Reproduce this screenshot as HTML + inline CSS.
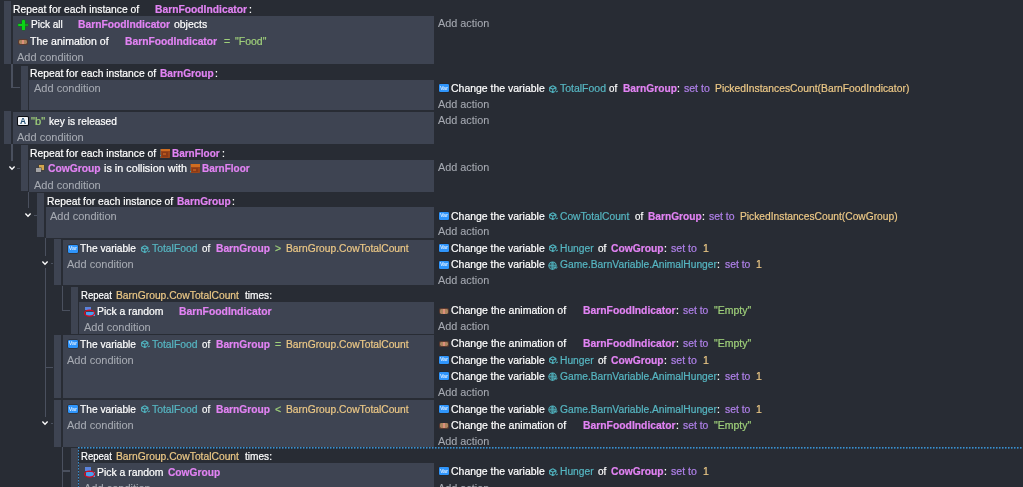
<!DOCTYPE html>
<html lang="en"><head><meta charset="utf-8"><title>Events</title>
<style>
html,body{margin:0;padding:0;}
body{width:1023px;height:487px;overflow:hidden;background:#282c34;position:relative;font-family:"Liberation Sans",sans-serif;}
#root{position:absolute;left:0;top:0;width:1023px;height:487px;overflow:hidden;will-change:transform;}
.b{position:absolute;}
span{position:absolute;white-space:pre;font-size:11.7px;line-height:16px;transform-origin:0 50%;-webkit-text-stroke:0.22px currentColor;}
.t{color:#ffffff;} .a{color:#a6aab2;-webkit-text-stroke-width:0.08px;} .o{color:#e283f3;font-weight:700;} .v{color:#56b6c2;}
.e{color:#ecc886;} .s{color:#9fd07a;} .p{color:#b081ea;}
.ic{transform:none;-webkit-text-stroke:0;font-family:"Liberation Sans",sans-serif;}
</style></head><body><div id="root">
<div class="b" style="left:433.75px;top:0.00px;width:589.25px;height:487.00px;background:#282c34"></div>
<div class="b" style="left:4.10px;top:0.90px;width:1018.90px;height:64.70px;background:#282c34"></div>
<div class="b" style="left:20.70px;top:65.60px;width:1002.30px;height:45.80px;background:#282c34"></div>
<div class="b" style="left:4.10px;top:111.40px;width:1018.90px;height:33.90px;background:#282c34"></div>
<div class="b" style="left:20.70px;top:145.30px;width:1002.30px;height:47.60px;background:#282c34"></div>
<div class="b" style="left:37.30px;top:192.90px;width:985.70px;height:46.30px;background:#282c34"></div>
<div class="b" style="left:53.90px;top:239.20px;width:969.10px;height:47.80px;background:#282c34"></div>
<div class="b" style="left:70.50px;top:287.00px;width:952.50px;height:47.70px;background:#282c34"></div>
<div class="b" style="left:53.90px;top:334.70px;width:969.10px;height:65.00px;background:#282c34"></div>
<div class="b" style="left:53.90px;top:399.70px;width:969.10px;height:48.30px;background:#282c34"></div>
<div class="b" style="left:70.50px;top:448.00px;width:952.50px;height:42.00px;background:#282c34"></div>
<div class="b" style="left:4.10px;top:0.90px;width:7.00px;height:62.85px;background:#3e4452"></div>
<div class="b" style="left:12.75px;top:15.90px;width:421.00px;height:47.85px;background:#3e4452"></div>
<div class="b" style="left:20.70px;top:65.60px;width:7.00px;height:44.40px;background:#3e4452"></div>
<div class="b" style="left:29.10px;top:79.50px;width:404.65px;height:30.50px;background:#3e4452"></div>
<div class="b" style="left:4.10px;top:111.40px;width:7.00px;height:32.35px;background:#3e4452"></div>
<div class="b" style="left:12.75px;top:111.70px;width:421.00px;height:32.05px;background:#3e4452"></div>
<div class="b" style="left:20.70px;top:145.30px;width:7.00px;height:46.20px;background:#3e4452"></div>
<div class="b" style="left:29.10px;top:159.50px;width:404.65px;height:32.00px;background:#3e4452"></div>
<div class="b" style="left:37.30px;top:192.90px;width:7.00px;height:44.60px;background:#3e4452"></div>
<div class="b" style="left:45.90px;top:207.00px;width:387.85px;height:30.50px;background:#3e4452"></div>
<div class="b" style="left:53.90px;top:239.20px;width:7.00px;height:46.30px;background:#3e4452"></div>
<div class="b" style="left:62.50px;top:239.80px;width:371.25px;height:45.70px;background:#3e4452"></div>
<div class="b" style="left:70.50px;top:287.00px;width:7.00px;height:46.75px;background:#3e4452"></div>
<div class="b" style="left:79.10px;top:301.75px;width:354.65px;height:32.00px;background:#3e4452"></div>
<div class="b" style="left:53.90px;top:334.70px;width:7.00px;height:63.30px;background:#3e4452"></div>
<div class="b" style="left:62.50px;top:335.20px;width:371.25px;height:62.80px;background:#3e4452"></div>
<div class="b" style="left:53.90px;top:399.70px;width:7.00px;height:47.00px;background:#3e4452"></div>
<div class="b" style="left:62.50px;top:400.10px;width:371.25px;height:46.60px;background:#3e4452"></div>
<div class="b" style="left:70.50px;top:448.00px;width:7.00px;height:42.00px;background:#3e4452"></div>
<div class="b" style="left:79.10px;top:463.00px;width:354.65px;height:27.00px;background:#3e4452"></div>
<div class="b" style="left:11.25px;top:63.90px;width:1.30px;height:24.20px;background:#4a505e"></div>
<div class="b" style="left:11.90px;top:86.85px;width:7.70px;height:1.30px;background:#4a505e"></div>
<div class="b" style="left:11.25px;top:143.90px;width:1.30px;height:17.00px;background:#4a505e"></div>
<div class="b" style="left:27.75px;top:191.60px;width:1.30px;height:16.90px;background:#4a505e"></div>
<div class="b" style="left:44.75px;top:237.60px;width:1.30px;height:18.60px;background:#4a505e"></div>
<div class="b" style="left:44.75px;top:267.50px;width:1.30px;height:149.10px;background:#4a505e"></div>
<div class="b" style="left:45.40px;top:366.85px;width:7.60px;height:1.30px;background:#4a505e"></div>
<div class="b" style="left:61.75px;top:285.60px;width:1.30px;height:25.30px;background:#4a505e"></div>
<div class="b" style="left:62.40px;top:309.65px;width:7.80px;height:1.30px;background:#4a505e"></div>
<div class="b" style="left:61.75px;top:446.70px;width:1.30px;height:40.30px;background:#4a505e"></div>
<div class="b" style="left:62.40px;top:470.35px;width:7.60px;height:1.30px;background:#4a505e"></div>
<div class="b" style="left:17.20px;top:168.00px;width:2.50px;height:1.20px;background:#4a505e"></div>
<div class="b" style="left:34.40px;top:215.20px;width:2.50px;height:1.20px;background:#4a505e"></div>
<div class="b" style="left:51.10px;top:262.60px;width:2.00px;height:1.20px;background:#4a505e"></div>
<div class="b" style="left:51.10px;top:423.10px;width:2.00px;height:1.20px;background:#4a505e"></div>
<svg class="b" style="left:7.50px;top:163.70px" width="8" height="8" viewBox="0 0 8 8"><path d="M1.4 2.5 L4 5.3 L6.6 2.5" fill="none" stroke="#fff" stroke-width="1.3"/></svg>
<svg class="b" style="left:24.40px;top:211.20px" width="8" height="8" viewBox="0 0 8 8"><path d="M1.4 2.5 L4 5.3 L6.6 2.5" fill="none" stroke="#fff" stroke-width="1.3"/></svg>
<svg class="b" style="left:41.00px;top:258.50px" width="8" height="8" viewBox="0 0 8 8"><path d="M1.4 2.5 L4 5.3 L6.6 2.5" fill="none" stroke="#fff" stroke-width="1.3"/></svg>
<svg class="b" style="left:41.00px;top:419.30px" width="8" height="8" viewBox="0 0 8 8"><path d="M1.4 2.5 L4 5.3 L6.6 2.5" fill="none" stroke="#fff" stroke-width="1.3"/></svg>
<div class="b" style="left:21.75px;top:20.10px;width:3.00px;height:9.80px;background:#0bd616;border-radius:0.9px;box-shadow:0 0 0 0.45px #0b7d12"></div><div class="b" style="left:17.80px;top:23.55px;width:10.10px;height:2.90px;background:#0bd616;border-radius:0.9px;box-shadow:0 0 0 0.45px #0b7d12"></div><div class="b" style="left:21.75px;top:20.50px;width:3.00px;height:9.00px;background:#0bd616;"></div><div class="b" style="left:24.95px;top:23.55px;width:3.50px;height:2.90px;background:#1a9a20;border-radius:0 0.9px 0.9px 0"></div>
<div class="b" style="left:18.10px;top:38.80px;width:10.00px;height:6.30px;background:#5a3a30;border-radius:2px"></div><div class="b" style="left:18.80px;top:39.50px;width:8.60px;height:4.90px;background:#a9855f;border-radius:1.4px"></div><div class="b" style="left:22.10px;top:39.50px;width:2.10px;height:4.90px;background:#dd8f7b;"></div>
<div class="b" style="left:17.00px;top:115.90px;width:12.00px;height:10.60px;background:#0b0d12;border-radius:2px"></div><div class="b" style="left:18.20px;top:117.10px;width:9.60px;height:7.90px;background:#f3f5f8;border-radius:0.8px"></div><span class="ic" style="left:19.90px;top:117.30px;font-size:8.4px;line-height:8px;color:#1d4a6e;font-weight:700">A</span>
<div class="b" style="left:159.90px;top:148.70px;width:10.00px;height:9.40px;background:#9c4519;border-radius:0.8px"></div><div class="b" style="left:161.10px;top:149.00px;width:8.80px;height:2.20px;background:#d06d20;"></div><div class="b" style="left:162.10px;top:152.30px;width:6.40px;height:4.60px;background:#8a3a17;"></div><div class="b" style="left:163.30px;top:153.10px;width:3.00px;height:2.20px;background:#b8561c;"></div><div class="b" style="left:159.90px;top:149.30px;width:1.30px;height:8.40px;background:#6a5a50;"></div><div class="b" style="left:160.10px;top:155.30px;width:1.00px;height:1.20px;background:#3aa0b4;"></div>
<div class="b" style="left:189.90px;top:164.10px;width:10.00px;height:9.40px;background:#9c4519;border-radius:0.8px"></div><div class="b" style="left:191.10px;top:164.40px;width:8.80px;height:2.20px;background:#d06d20;"></div><div class="b" style="left:192.10px;top:167.70px;width:6.40px;height:4.60px;background:#8a3a17;"></div><div class="b" style="left:193.30px;top:168.50px;width:3.00px;height:2.20px;background:#b8561c;"></div><div class="b" style="left:189.90px;top:164.70px;width:1.30px;height:8.40px;background:#6a5a50;"></div><div class="b" style="left:190.10px;top:170.70px;width:1.00px;height:1.20px;background:#3aa0b4;"></div>
<div class="b" style="left:38.50px;top:165.10px;width:5.40px;height:4.60px;background:#d2a64e;box-shadow:0 0 0 0.5px #4a3c28"></div><div class="b" style="left:35.90px;top:168.30px;width:5.60px;height:4.20px;background:#a4a4a6;box-shadow:0 0 0 0.5px #3c3c40"></div>
<div class="b" style="left:439.00px;top:84.45px;width:10.10px;height:8.00px;background:#2f95fb;border-radius:1.3px;box-shadow:0 0 0 0.5px #20242c"></div><span class="ic" style="left:439.90px;top:84.55px;font-size:5.4px;line-height:6.4px;color:#cfe6ff;font-weight:700;letter-spacing:-0.1px">Var</span>
<div class="b" style="left:439.00px;top:211.70px;width:10.10px;height:8.00px;background:#2f95fb;border-radius:1.3px;box-shadow:0 0 0 0.5px #20242c"></div><span class="ic" style="left:439.90px;top:211.80px;font-size:5.4px;line-height:6.4px;color:#cfe6ff;font-weight:700;letter-spacing:-0.1px">Var</span>
<div class="b" style="left:439.00px;top:244.20px;width:10.10px;height:8.00px;background:#2f95fb;border-radius:1.3px;box-shadow:0 0 0 0.5px #20242c"></div><span class="ic" style="left:439.90px;top:244.30px;font-size:5.4px;line-height:6.4px;color:#cfe6ff;font-weight:700;letter-spacing:-0.1px">Var</span>
<div class="b" style="left:439.00px;top:260.60px;width:10.10px;height:8.00px;background:#2f95fb;border-radius:1.3px;box-shadow:0 0 0 0.5px #20242c"></div><span class="ic" style="left:439.90px;top:260.70px;font-size:5.4px;line-height:6.4px;color:#cfe6ff;font-weight:700;letter-spacing:-0.1px">Var</span>
<div class="b" style="left:439.00px;top:356.20px;width:10.10px;height:8.00px;background:#2f95fb;border-radius:1.3px;box-shadow:0 0 0 0.5px #20242c"></div><span class="ic" style="left:439.90px;top:356.30px;font-size:5.4px;line-height:6.4px;color:#cfe6ff;font-weight:700;letter-spacing:-0.1px">Var</span>
<div class="b" style="left:439.00px;top:372.45px;width:10.10px;height:8.00px;background:#2f95fb;border-radius:1.3px;box-shadow:0 0 0 0.5px #20242c"></div><span class="ic" style="left:439.90px;top:372.55px;font-size:5.4px;line-height:6.4px;color:#cfe6ff;font-weight:700;letter-spacing:-0.1px">Var</span>
<div class="b" style="left:439.00px;top:404.95px;width:10.10px;height:8.00px;background:#2f95fb;border-radius:1.3px;box-shadow:0 0 0 0.5px #20242c"></div><span class="ic" style="left:439.90px;top:405.05px;font-size:5.4px;line-height:6.4px;color:#cfe6ff;font-weight:700;letter-spacing:-0.1px">Var</span>
<div class="b" style="left:439.00px;top:467.45px;width:10.10px;height:8.00px;background:#2f95fb;border-radius:1.3px;box-shadow:0 0 0 0.5px #20242c"></div><span class="ic" style="left:439.90px;top:467.55px;font-size:5.4px;line-height:6.4px;color:#cfe6ff;font-weight:700;letter-spacing:-0.1px">Var</span>
<div class="b" style="left:438.90px;top:308.15px;width:10.00px;height:6.30px;background:#5a3a30;border-radius:2px"></div><div class="b" style="left:439.60px;top:308.85px;width:8.60px;height:4.90px;background:#a9855f;border-radius:1.4px"></div><div class="b" style="left:442.90px;top:308.85px;width:2.10px;height:4.90px;background:#dd8f7b;"></div>
<div class="b" style="left:438.90px;top:340.90px;width:10.00px;height:6.30px;background:#5a3a30;border-radius:2px"></div><div class="b" style="left:439.60px;top:341.60px;width:8.60px;height:4.90px;background:#a9855f;border-radius:1.4px"></div><div class="b" style="left:442.90px;top:341.60px;width:2.10px;height:4.90px;background:#dd8f7b;"></div>
<div class="b" style="left:438.90px;top:422.65px;width:10.00px;height:6.30px;background:#5a3a30;border-radius:2px"></div><div class="b" style="left:439.60px;top:423.35px;width:8.60px;height:4.90px;background:#a9855f;border-radius:1.4px"></div><div class="b" style="left:442.90px;top:423.35px;width:2.10px;height:4.90px;background:#dd8f7b;"></div>
<div class="b" style="left:67.90px;top:244.70px;width:10.10px;height:8.00px;background:#2f95fb;border-radius:1.3px;box-shadow:0 0 0 0.5px #20242c"></div><span class="ic" style="left:68.80px;top:244.80px;font-size:5.4px;line-height:6.4px;color:#cfe6ff;font-weight:700;letter-spacing:-0.1px">Var</span>
<svg class="b" style="left:141.00px;top:244.70px" width="9.9" height="8.5" viewBox="0 0 11 9.4"><path d="M4.2 0.9 L7.7 2.7 L7.7 5.6 M6.0 7.4 L4.2 8.3 L0.7 6.5 L0.7 2.7 L4.2 0.9 M0.7 2.7 L4.2 4.6 L7.7 2.7 M4.2 4.6 V8.3" fill="none" stroke="#50b4c0" stroke-width="1.2" stroke-linejoin="round"/><path d="M5.9 7.3 L7.3 6.1 L8.4 7.7 L10.0 6.5" fill="none" stroke="#50b4c0" stroke-width="1.1"/></svg>
<div class="b" style="left:67.90px;top:339.90px;width:10.10px;height:8.00px;background:#2f95fb;border-radius:1.3px;box-shadow:0 0 0 0.5px #20242c"></div><span class="ic" style="left:68.80px;top:340.00px;font-size:5.4px;line-height:6.4px;color:#cfe6ff;font-weight:700;letter-spacing:-0.1px">Var</span>
<svg class="b" style="left:141.00px;top:339.90px" width="9.9" height="8.5" viewBox="0 0 11 9.4"><path d="M4.2 0.9 L7.7 2.7 L7.7 5.6 M6.0 7.4 L4.2 8.3 L0.7 6.5 L0.7 2.7 L4.2 0.9 M0.7 2.7 L4.2 4.6 L7.7 2.7 M4.2 4.6 V8.3" fill="none" stroke="#50b4c0" stroke-width="1.2" stroke-linejoin="round"/><path d="M5.9 7.3 L7.3 6.1 L8.4 7.7 L10.0 6.5" fill="none" stroke="#50b4c0" stroke-width="1.1"/></svg>
<div class="b" style="left:67.90px;top:405.40px;width:10.10px;height:8.00px;background:#2f95fb;border-radius:1.3px;box-shadow:0 0 0 0.5px #20242c"></div><span class="ic" style="left:68.80px;top:405.50px;font-size:5.4px;line-height:6.4px;color:#cfe6ff;font-weight:700;letter-spacing:-0.1px">Var</span>
<svg class="b" style="left:141.00px;top:405.40px" width="9.9" height="8.5" viewBox="0 0 11 9.4"><path d="M4.2 0.9 L7.7 2.7 L7.7 5.6 M6.0 7.4 L4.2 8.3 L0.7 6.5 L0.7 2.7 L4.2 0.9 M0.7 2.7 L4.2 4.6 L7.7 2.7 M4.2 4.6 V8.3" fill="none" stroke="#50b4c0" stroke-width="1.2" stroke-linejoin="round"/><path d="M5.9 7.3 L7.3 6.1 L8.4 7.7 L10.0 6.5" fill="none" stroke="#50b4c0" stroke-width="1.1"/></svg>
<svg class="b" style="left:548.90px;top:84.65px" width="9.9" height="8.5" viewBox="0 0 11 9.4"><path d="M4.2 0.9 L7.7 2.7 L7.7 5.6 M6.0 7.4 L4.2 8.3 L0.7 6.5 L0.7 2.7 L4.2 0.9 M0.7 2.7 L4.2 4.6 L7.7 2.7 M4.2 4.6 V8.3" fill="none" stroke="#50b4c0" stroke-width="1.2" stroke-linejoin="round"/><path d="M5.9 7.3 L7.3 6.1 L8.4 7.7 L10.0 6.5" fill="none" stroke="#50b4c0" stroke-width="1.1"/></svg>
<svg class="b" style="left:548.90px;top:211.90px" width="9.9" height="8.5" viewBox="0 0 11 9.4"><path d="M4.2 0.9 L7.7 2.7 L7.7 5.6 M6.0 7.4 L4.2 8.3 L0.7 6.5 L0.7 2.7 L4.2 0.9 M0.7 2.7 L4.2 4.6 L7.7 2.7 M4.2 4.6 V8.3" fill="none" stroke="#50b4c0" stroke-width="1.2" stroke-linejoin="round"/><path d="M5.9 7.3 L7.3 6.1 L8.4 7.7 L10.0 6.5" fill="none" stroke="#50b4c0" stroke-width="1.1"/></svg>
<svg class="b" style="left:548.90px;top:244.20px" width="9.9" height="8.5" viewBox="0 0 11 9.4"><path d="M4.2 0.9 L7.7 2.7 L7.7 5.6 M6.0 7.4 L4.2 8.3 L0.7 6.5 L0.7 2.7 L4.2 0.9 M0.7 2.7 L4.2 4.6 L7.7 2.7 M4.2 4.6 V8.3" fill="none" stroke="#50b4c0" stroke-width="1.2" stroke-linejoin="round"/><path d="M5.9 7.3 L7.3 6.1 L8.4 7.7 L10.0 6.5" fill="none" stroke="#50b4c0" stroke-width="1.1"/></svg>
<svg class="b" style="left:548.90px;top:356.15px" width="9.9" height="8.5" viewBox="0 0 11 9.4"><path d="M4.2 0.9 L7.7 2.7 L7.7 5.6 M6.0 7.4 L4.2 8.3 L0.7 6.5 L0.7 2.7 L4.2 0.9 M0.7 2.7 L4.2 4.6 L7.7 2.7 M4.2 4.6 V8.3" fill="none" stroke="#50b4c0" stroke-width="1.2" stroke-linejoin="round"/><path d="M5.9 7.3 L7.3 6.1 L8.4 7.7 L10.0 6.5" fill="none" stroke="#50b4c0" stroke-width="1.1"/></svg>
<svg class="b" style="left:548.90px;top:467.65px" width="9.9" height="8.5" viewBox="0 0 11 9.4"><path d="M4.2 0.9 L7.7 2.7 L7.7 5.6 M6.0 7.4 L4.2 8.3 L0.7 6.5 L0.7 2.7 L4.2 0.9 M0.7 2.7 L4.2 4.6 L7.7 2.7 M4.2 4.6 V8.3" fill="none" stroke="#50b4c0" stroke-width="1.2" stroke-linejoin="round"/><path d="M5.9 7.3 L7.3 6.1 L8.4 7.7 L10.0 6.5" fill="none" stroke="#50b4c0" stroke-width="1.1"/></svg>
<svg class="b" style="left:548.00px;top:260.50px" width="10.1" height="9.5" viewBox="0 0 11.2 10.6"><circle cx="5" cy="5.2" r="4.1" fill="#50b4c0" fill-opacity="0.22" stroke="#50b4c0" stroke-width="1.15"/><path d="M5 1.1 C2.9 3 2.9 7.4 5 9.3 M5 1.1 C7.1 3 7.1 7.4 5 9.3 M0.9 5.2 H9.1 M5 1.1 V9.3" fill="none" stroke="#50b4c0" stroke-width="0.8"/><path d="M6.6 7.7 L8.0 6.5 L9.0 8.1 L10.6 6.9" fill="none" stroke="#50b4c0" stroke-width="1.1"/></svg>
<svg class="b" style="left:548.00px;top:372.35px" width="10.1" height="9.5" viewBox="0 0 11.2 10.6"><circle cx="5" cy="5.2" r="4.1" fill="#50b4c0" fill-opacity="0.22" stroke="#50b4c0" stroke-width="1.15"/><path d="M5 1.1 C2.9 3 2.9 7.4 5 9.3 M5 1.1 C7.1 3 7.1 7.4 5 9.3 M0.9 5.2 H9.1 M5 1.1 V9.3" fill="none" stroke="#50b4c0" stroke-width="0.8"/><path d="M6.6 7.7 L8.0 6.5 L9.0 8.1 L10.6 6.9" fill="none" stroke="#50b4c0" stroke-width="1.1"/></svg>
<svg class="b" style="left:548.00px;top:404.60px" width="10.1" height="9.5" viewBox="0 0 11.2 10.6"><circle cx="5" cy="5.2" r="4.1" fill="#50b4c0" fill-opacity="0.22" stroke="#50b4c0" stroke-width="1.15"/><path d="M5 1.1 C2.9 3 2.9 7.4 5 9.3 M5 1.1 C7.1 3 7.1 7.4 5 9.3 M0.9 5.2 H9.1 M5 1.1 V9.3" fill="none" stroke="#50b4c0" stroke-width="0.8"/><path d="M6.6 7.7 L8.0 6.5 L9.0 8.1 L10.6 6.9" fill="none" stroke="#50b4c0" stroke-width="1.1"/></svg>
<div class="b" style="left:84.60px;top:306.60px;width:6.40px;height:3.60px;background:#5b84de;"></div><div class="b" style="left:86.00px;top:311.50px;width:9.00px;height:4.90px;background:#4a9ff0;"></div><svg class="b" style="left:82.80px;top:309.00px" width="13" height="9" viewBox="0 0 13 9"><ellipse cx="6.5" cy="4.1" rx="5.0" ry="2.95" fill="none" stroke="#e0061e" stroke-width="1.15"/></svg>
<div class="b" style="left:84.60px;top:467.40px;width:6.40px;height:3.60px;background:#5b84de;"></div><div class="b" style="left:86.00px;top:472.30px;width:9.00px;height:4.90px;background:#4a9ff0;"></div><svg class="b" style="left:82.80px;top:469.80px" width="13" height="9" viewBox="0 0 13 9"><ellipse cx="6.5" cy="4.1" rx="5.0" ry="2.95" fill="none" stroke="#e0061e" stroke-width="1.15"/></svg>
<div class="b" style="left:78px;top:447px;width:945px;height:1px;background:repeating-linear-gradient(90deg,#3a90cf 0,#3a90cf 1px,#30628a 1px,#30628a 2px,#282c34 2px,#282c34 3px)"></div>
<div class="b" style="left:78px;top:448px;width:945px;height:1px;background:repeating-linear-gradient(90deg,#2f6d9c 0,#2f6d9c 1px,#2c4a63 1px,#2c4a63 2px,#282c34 2px,#282c34 3px)"></div>
<div class="b" style="left:78px;top:447px;width:1px;height:45px;background:repeating-linear-gradient(180deg,#3a90cf 0,#3a90cf 1px,#30628a 1px,#30628a 2px,#282c34 2px,#282c34 3px)"></div>
<span id="t0" class="t" style="left:12.50px;top:1.05px;transform:scaleX(0.8821);">Repeat for each instance of</span>
<span id="t1" class="o" style="left:155.00px;top:1.05px;transform:scaleX(0.8810);">BarnFoodIndicator</span>
<span id="t2" class="t" style="left:249.10px;top:1.05px;transform:scaleX(0.9000);">:</span>
<span id="t3" class="t" style="left:30.60px;top:16.05px;transform:scaleX(0.8593);">Pick all</span>
<span id="t4" class="o" style="left:78.00px;top:16.05px;transform:scaleX(0.8810);">BarnFoodIndicator</span>
<span id="t5" class="t" style="left:174.25px;top:16.05px;transform:scaleX(0.8941);">objects</span>
<span id="t6" class="t" style="left:30.00px;top:33.05px;transform:scaleX(0.9025);">The animation of</span>
<span id="t7" class="o" style="left:125.00px;top:33.05px;transform:scaleX(0.8810);">BarnFoodIndicator</span>
<span id="t8" class="s" style="left:223.50px;top:33.05px;transform:scaleX(0.9000);">=</span>
<span id="t9" class="s" style="left:235.00px;top:33.05px;transform:scaleX(0.8983);">"Food"</span>
<span id="t10" class="a" style="left:17.15px;top:49.05px;transform:scaleX(0.9420);">Add condition</span>
<span id="t11" class="a" style="left:437.75px;top:15.05px;transform:scaleX(0.9273);">Add action</span>
<span id="t12" class="t" style="left:29.50px;top:65.05px;transform:scaleX(0.8821);">Repeat for each instance of</span>
<span id="t13" class="o" style="left:159.50px;top:65.05px;transform:scaleX(0.8693);">BarnGroup</span>
<span id="t14" class="t" style="left:214.60px;top:65.05px;transform:scaleX(0.9000);">:</span>
<span id="t15" class="a" style="left:33.50px;top:80.05px;transform:scaleX(0.9420);">Add condition</span>
<span id="t16" class="t" style="left:450.50px;top:80.05px;transform:scaleX(0.8957);">Change the variable</span>
<span id="t17" class="v" style="left:560.00px;top:80.05px;transform:scaleX(0.8952);">TotalFood</span>
<span id="t18" class="t" style="left:609.25px;top:80.05px;transform:scaleX(0.8333);">of</span>
<span id="t19" class="o" style="left:622.50px;top:80.05px;transform:scaleX(0.8733);">BarnGroup</span>
<span id="t20" class="t" style="left:676.60px;top:80.05px;transform:scaleX(0.9000);">:</span>
<span id="t21" class="p" style="left:684.00px;top:80.05px;transform:scaleX(0.9008);">set to</span>
<span id="t22" class="e" style="left:714.80px;top:80.05px;transform:scaleX(0.8823);">PickedInstancesCount(BarnFoodIndicator)</span>
<span id="t23" class="a" style="left:437.75px;top:96.05px;transform:scaleX(0.9273);">Add action</span>
<span id="t24" class="s" style="left:31.00px;top:113.05px;transform:scaleX(0.9557);">"b"</span>
<span id="t25" class="t" style="left:48.75px;top:113.05px;transform:scaleX(0.8715);">key is released</span>
<span id="t26" class="a" style="left:17.15px;top:129.05px;transform:scaleX(0.9420);">Add condition</span>
<span id="t27" class="a" style="left:437.75px;top:112.05px;transform:scaleX(0.9273);">Add action</span>
<span id="t28" class="t" style="left:29.50px;top:145.05px;transform:scaleX(0.8821);">Repeat for each instance of</span>
<span id="t29" class="o" style="left:172.00px;top:145.05px;transform:scaleX(0.8527);">BarnFloor</span>
<span id="t30" class="t" style="left:221.60px;top:145.05px;transform:scaleX(0.9000);">:</span>
<span id="t31" class="o" style="left:47.50px;top:160.05px;transform:scaleX(0.8810);">CowGroup</span>
<span id="t32" class="t" style="left:103.75px;top:160.05px;transform:scaleX(0.9255);">is in collision with</span>
<span id="t33" class="o" style="left:202.00px;top:160.05px;transform:scaleX(0.8527);">BarnFloor</span>
<span id="t34" class="a" style="left:33.50px;top:177.05px;transform:scaleX(0.9420);">Add condition</span>
<span id="t35" class="a" style="left:437.75px;top:159.05px;transform:scaleX(0.9273);">Add action</span>
<span id="t36" class="t" style="left:46.50px;top:193.05px;transform:scaleX(0.8821);">Repeat for each instance of</span>
<span id="t37" class="o" style="left:176.50px;top:193.05px;transform:scaleX(0.8693);">BarnGroup</span>
<span id="t38" class="t" style="left:231.60px;top:193.05px;transform:scaleX(0.9000);">:</span>
<span id="t39" class="a" style="left:50.30px;top:208.05px;transform:scaleX(0.9420);">Add condition</span>
<span id="t40" class="t" style="left:450.50px;top:208.05px;transform:scaleX(0.8957);">Change the variable</span>
<span id="t41" class="v" style="left:560.00px;top:208.05px;transform:scaleX(0.8749);">CowTotalCount</span>
<span id="t42" class="t" style="left:634.50px;top:208.05px;transform:scaleX(0.8333);">of</span>
<span id="t43" class="o" style="left:648.00px;top:208.05px;transform:scaleX(0.8693);">BarnGroup</span>
<span id="t44" class="t" style="left:701.80px;top:208.05px;transform:scaleX(0.9000);">:</span>
<span id="t45" class="p" style="left:709.00px;top:208.05px;transform:scaleX(0.8939);">set to</span>
<span id="t46" class="e" style="left:740.30px;top:208.05px;transform:scaleX(0.8759);">PickedInstancesCount(CowGroup)</span>
<span id="t47" class="a" style="left:437.75px;top:223.05px;transform:scaleX(0.9273);">Add action</span>
<span id="t48" class="t" style="left:80.30px;top:240.05px;transform:scaleX(0.8713);">The variable</span>
<span id="t49" class="v" style="left:152.40px;top:240.05px;transform:scaleX(0.8874);">TotalFood</span>
<span id="t50" class="t" style="left:202.00px;top:240.05px;transform:scaleX(0.8333);">of</span>
<span id="t51" class="o" style="left:215.50px;top:240.05px;transform:scaleX(0.8774);">BarnGroup</span>
<span id="t52" class="s" style="left:274.50px;top:240.05px;transform:scaleX(0.9000);">&gt;</span>
<span id="t53" class="e" style="left:286.25px;top:240.05px;transform:scaleX(0.8777);">BarnGroup.CowTotalCount</span>
<span id="t54" class="a" style="left:66.90px;top:256.05px;transform:scaleX(0.9420);">Add condition</span>
<span id="t55" class="t" style="left:450.50px;top:240.05px;transform:scaleX(0.8957);">Change the variable</span>
<span id="t56" class="v" style="left:560.00px;top:240.05px;transform:scaleX(0.8780);">Hunger</span>
<span id="t57" class="t" style="left:598.00px;top:240.05px;transform:scaleX(0.8571);">of</span>
<span id="t58" class="o" style="left:611.25px;top:240.05px;transform:scaleX(0.8810);">CowGroup</span>
<span id="t59" class="t" style="left:664.10px;top:240.05px;transform:scaleX(0.9000);">:</span>
<span id="t60" class="p" style="left:670.75px;top:240.05px;transform:scaleX(0.9025);">set to</span>
<span id="t61" class="e" style="left:702.50px;top:240.05px;transform:scaleX(0.9000);">1</span>
<span id="t62" class="t" style="left:450.50px;top:256.05px;transform:scaleX(0.8957);">Change the variable</span>
<span id="t63" class="v" style="left:560.00px;top:256.05px;transform:scaleX(0.8762);">Game.BarnVariable.AnimalHunger</span>
<span id="t64" class="t" style="left:717.40px;top:256.05px;transform:scaleX(0.9000);">:</span>
<span id="t65" class="p" style="left:724.50px;top:256.05px;transform:scaleX(0.8870);">set to</span>
<span id="t66" class="e" style="left:755.60px;top:256.05px;transform:scaleX(0.9000);">1</span>
<span id="t67" class="a" style="left:437.75px;top:272.05px;transform:scaleX(0.9273);">Add action</span>
<span id="t68" class="t" style="left:80.60px;top:287.05px;transform:scaleX(0.8168);">Repeat</span>
<span id="t69" class="e" style="left:116.40px;top:287.05px;transform:scaleX(0.8802);">BarnGroup.CowTotalCount</span>
<span id="t70" class="t" style="left:244.50px;top:287.05px;transform:scaleX(0.8650);">times:</span>
<span id="t71" class="t" style="left:97.20px;top:303.05px;transform:scaleX(0.8896);">Pick a random</span>
<span id="t72" class="o" style="left:179.00px;top:303.05px;transform:scaleX(0.8858);">BarnFoodIndicator</span>
<span id="t73" class="a" style="left:83.50px;top:319.05px;transform:scaleX(0.9420);">Add condition</span>
<span id="t74" class="t" style="left:450.50px;top:302.05px;transform:scaleX(0.9036);">Change the animation of</span>
<span id="t75" class="o" style="left:582.50px;top:302.05px;transform:scaleX(0.8858);">BarnFoodIndicator</span>
<span id="t76" class="t" style="left:675.80px;top:302.05px;transform:scaleX(0.9000);">:</span>
<span id="t77" class="p" style="left:682.50px;top:302.05px;transform:scaleX(0.8836);">set to</span>
<span id="t78" class="s" style="left:713.75px;top:302.05px;transform:scaleX(0.8965);">"Empty"</span>
<span id="t79" class="a" style="left:437.75px;top:318.05px;transform:scaleX(0.9273);">Add action</span>
<span id="t80" class="t" style="left:80.30px;top:336.05px;transform:scaleX(0.8713);">The variable</span>
<span id="t81" class="v" style="left:152.40px;top:336.05px;transform:scaleX(0.8874);">TotalFood</span>
<span id="t82" class="t" style="left:202.00px;top:336.05px;transform:scaleX(0.8333);">of</span>
<span id="t83" class="o" style="left:215.50px;top:336.05px;transform:scaleX(0.8774);">BarnGroup</span>
<span id="t84" class="s" style="left:274.50px;top:336.05px;transform:scaleX(0.9000);">=</span>
<span id="t85" class="e" style="left:286.25px;top:336.05px;transform:scaleX(0.8777);">BarnGroup.CowTotalCount</span>
<span id="t86" class="a" style="left:66.90px;top:352.05px;transform:scaleX(0.9420);">Add condition</span>
<span id="t87" class="t" style="left:450.50px;top:335.05px;transform:scaleX(0.9036);">Change the animation of</span>
<span id="t88" class="o" style="left:582.50px;top:335.05px;transform:scaleX(0.8858);">BarnFoodIndicator</span>
<span id="t89" class="t" style="left:675.80px;top:335.05px;transform:scaleX(0.9000);">:</span>
<span id="t90" class="p" style="left:682.50px;top:335.05px;transform:scaleX(0.8836);">set to</span>
<span id="t91" class="s" style="left:713.75px;top:335.05px;transform:scaleX(0.8965);">"Empty"</span>
<span id="t92" class="t" style="left:450.50px;top:352.05px;transform:scaleX(0.8957);">Change the variable</span>
<span id="t93" class="v" style="left:560.00px;top:352.05px;transform:scaleX(0.8780);">Hunger</span>
<span id="t94" class="t" style="left:598.00px;top:352.05px;transform:scaleX(0.8571);">of</span>
<span id="t95" class="o" style="left:611.25px;top:352.05px;transform:scaleX(0.8810);">CowGroup</span>
<span id="t96" class="t" style="left:664.10px;top:352.05px;transform:scaleX(0.9000);">:</span>
<span id="t97" class="p" style="left:670.75px;top:352.05px;transform:scaleX(0.9025);">set to</span>
<span id="t98" class="e" style="left:702.50px;top:352.05px;transform:scaleX(0.9000);">1</span>
<span id="t99" class="t" style="left:450.50px;top:368.05px;transform:scaleX(0.8957);">Change the variable</span>
<span id="t100" class="v" style="left:560.00px;top:368.05px;transform:scaleX(0.8762);">Game.BarnVariable.AnimalHunger</span>
<span id="t101" class="t" style="left:717.40px;top:368.05px;transform:scaleX(0.9000);">:</span>
<span id="t102" class="p" style="left:724.50px;top:368.05px;transform:scaleX(0.8870);">set to</span>
<span id="t103" class="e" style="left:755.60px;top:368.05px;transform:scaleX(0.9000);">1</span>
<span id="t104" class="a" style="left:437.75px;top:384.05px;transform:scaleX(0.9273);">Add action</span>
<span id="t105" class="t" style="left:80.30px;top:401.05px;transform:scaleX(0.8713);">The variable</span>
<span id="t106" class="v" style="left:152.40px;top:401.05px;transform:scaleX(0.8874);">TotalFood</span>
<span id="t107" class="t" style="left:202.00px;top:401.05px;transform:scaleX(0.8333);">of</span>
<span id="t108" class="o" style="left:215.50px;top:401.05px;transform:scaleX(0.8774);">BarnGroup</span>
<span id="t109" class="s" style="left:274.50px;top:401.05px;transform:scaleX(0.9000);">&lt;</span>
<span id="t110" class="e" style="left:286.25px;top:401.05px;transform:scaleX(0.8777);">BarnGroup.CowTotalCount</span>
<span id="t111" class="a" style="left:66.90px;top:417.05px;transform:scaleX(0.9420);">Add condition</span>
<span id="t112" class="t" style="left:450.50px;top:401.05px;transform:scaleX(0.8957);">Change the variable</span>
<span id="t113" class="v" style="left:560.00px;top:401.05px;transform:scaleX(0.8762);">Game.BarnVariable.AnimalHunger</span>
<span id="t114" class="t" style="left:717.40px;top:401.05px;transform:scaleX(0.9000);">:</span>
<span id="t115" class="p" style="left:724.50px;top:401.05px;transform:scaleX(0.8870);">set to</span>
<span id="t116" class="e" style="left:755.60px;top:401.05px;transform:scaleX(0.9000);">1</span>
<span id="t117" class="t" style="left:450.50px;top:417.05px;transform:scaleX(0.9036);">Change the animation of</span>
<span id="t118" class="o" style="left:582.50px;top:417.05px;transform:scaleX(0.8858);">BarnFoodIndicator</span>
<span id="t119" class="t" style="left:675.80px;top:417.05px;transform:scaleX(0.9000);">:</span>
<span id="t120" class="p" style="left:682.50px;top:417.05px;transform:scaleX(0.8836);">set to</span>
<span id="t121" class="s" style="left:713.75px;top:417.05px;transform:scaleX(0.8965);">"Empty"</span>
<span id="t122" class="a" style="left:437.75px;top:433.05px;transform:scaleX(0.9273);">Add action</span>
<span id="t123" class="t" style="left:80.60px;top:448.05px;transform:scaleX(0.8168);">Repeat</span>
<span id="t124" class="e" style="left:116.40px;top:448.05px;transform:scaleX(0.8802);">BarnGroup.CowTotalCount</span>
<span id="t125" class="t" style="left:244.50px;top:448.05px;transform:scaleX(0.8650);">times:</span>
<span id="t126" class="t" style="left:97.20px;top:464.05px;transform:scaleX(0.8896);">Pick a random</span>
<span id="t127" class="o" style="left:167.50px;top:464.05px;transform:scaleX(0.8727);">CowGroup</span>
<span id="t128" class="a" style="left:83.50px;top:480.05px;transform:scaleX(0.9420);">Add condition</span>
<span id="t129" class="t" style="left:450.50px;top:463.05px;transform:scaleX(0.8957);">Change the variable</span>
<span id="t130" class="v" style="left:560.00px;top:463.05px;transform:scaleX(0.8780);">Hunger</span>
<span id="t131" class="t" style="left:598.00px;top:463.05px;transform:scaleX(0.8571);">of</span>
<span id="t132" class="o" style="left:611.25px;top:463.05px;transform:scaleX(0.8810);">CowGroup</span>
<span id="t133" class="t" style="left:664.10px;top:463.05px;transform:scaleX(0.9000);">:</span>
<span id="t134" class="p" style="left:670.75px;top:463.05px;transform:scaleX(0.9025);">set to</span>
<span id="t135" class="e" style="left:702.50px;top:463.05px;transform:scaleX(0.9000);">1</span>
<span id="t136" class="a" style="left:437.75px;top:480.05px;transform:scaleX(0.9273);">Add action</span>
</div></body></html>
